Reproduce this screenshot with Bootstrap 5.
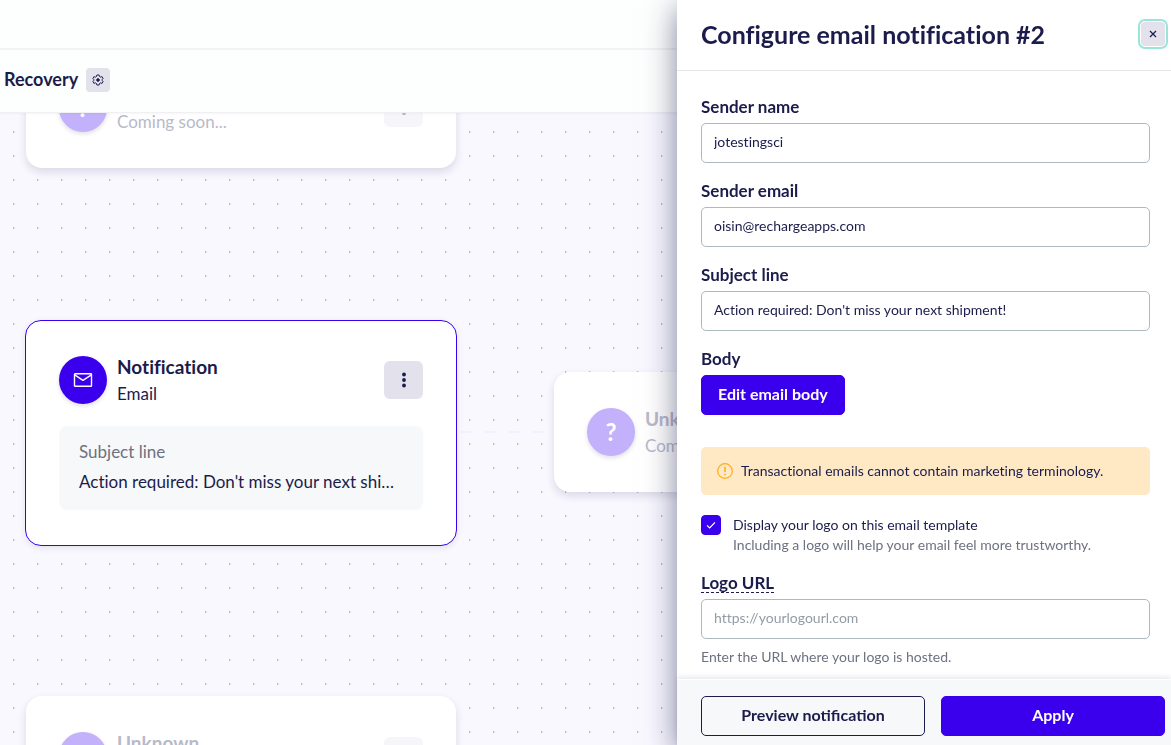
<!DOCTYPE html>
<html lang="en">
<head>
<meta charset="utf-8">
<meta name="viewport" content="width=device-width, initial-scale=1">
<title>Recovery flow</title>
<link href="https://cdn.jsdelivr.net/npm/bootstrap@5.3.0/dist/css/bootstrap.min.css" rel="stylesheet">
<style>
  :root { --ink: #1b1c4b; --brand: #3a00ee; --muted: #6e7180; --chip: #e2e1ec; --pale: #f6f8f9; }
  body { font-family: Lato, "Open Sans", sans-serif; font-variant-ligatures: none; color: var(--ink); font-size: 14px; line-height: 20px; }
  .topbar { height: 50px; background: #fdfffe; border-bottom: 2px solid #f3f3f5; }
  .flowbar { height: 63px; background: #fdfffe; border-bottom: 1px solid #efeff4; box-shadow: 0 1px 2px rgba(27,28,75,.04); padding: 0 0 3px 4px; z-index: 2; }
  .flowbar h1 { font-size: 18px; line-height: 24px; padding-bottom: 2px; }
  .chip-btn { background: var(--chip); color: var(--ink); border: 0; padding: 0; display: inline-flex; align-items: center; justify-content: center; border-radius: 4px; width: 24px; height: 24px; flex: none; }

  /* free canvas that carries the flow nodes */
  .flow-canvas { background-color: #f9f8ff;
    background-image: url("data:image/svg+xml,%3Csvg xmlns='http://www.w3.org/2000/svg' width='24' height='24'%3E%3Crect width='1' height='2' fill='%23b9b8c6'/%3E%3Crect x='1' width='1' height='2' fill='%23e6e5ee'/%3E%3C/svg%3E");
    background-position: 13px 18px; }
  .node { position: absolute; width: 430px; background: #fff; border-radius: 16px; padding: 36px 33px; box-shadow: 0 4px 8px rgba(27,28,75,.14); }
  .node-picked { width: 432px; border: 1px solid var(--brand); padding: 35px 33px; box-shadow: 0 2px 6px rgba(27,28,75,.1); }
  .node-icon { width: 48px; height: 48px; flex: none; background: var(--brand); color: #fff; box-shadow: 0 2px 4px rgba(27,28,75,.14); }
  .node-top { height: 48px; gap: 10px; }
  .node h2 { font-size: 19px; line-height: 27px; }
  .node p { font-size: 17px; line-height: 27px; }
  .node .chip-btn { width: 39px; height: 38px; border-radius: 6px; }
  .node-later h2, .node-later p { color: #b8b9ca; }
  .node-later .node-icon { background: #c4b1fb; }
  .node-later .chip-btn { background: #f6f6fa; color: #b8b9ca; }
  .node-detail { background: var(--pale); border-radius: 8px; margin-top: 22px; padding: 11px 20px 13px; }
  .node .node-detail p { line-height: 30px; }
  .q-mark { font-size: 24px; line-height: 24px; font-weight: 700; }
  .link-line { position: absolute; height: 2px; background: repeating-linear-gradient(90deg, #f3f0ff 0 12px, transparent 12px 24px); }

  /* settings drawer */
  .offcanvas.drawer { --bs-offcanvas-width: 494px; --bs-offcanvas-color: var(--ink); border: 0; box-shadow: 0 8px 30px rgba(27,28,75,.55); }
  .drawer-head { height: 71px; border-bottom: 1px solid #e6e7e9; padding: 0 6px 2px 24px; }
  .drawer-head h2 { font-size: 25px; line-height: 32px; }
  .drawer-head .chip-btn { outline: 2px solid #9be4d8; outline-offset: 1px; }
  .drawer-body { padding: 24px 21px 12px 24px; }
  .field { margin-bottom: 16px; }
  .field-label { display: block; font-size: 17px; line-height: 23px; height: 24px; margin-bottom: 4px; font-weight: 700; }
  .form-control { font-size: 14px; line-height: 20px; height: 40px; padding: 6px 12px 10px; border-color: #adb9c1; border-radius: 5px; color: var(--ink); font-variant-ligatures: none; }
  .form-control::placeholder { color: #929ca5; }
  .btn-flow { font-size: 16px; line-height: 24px; font-weight: 700; padding: 6px 16px 8px; border-radius: 5px; }
  .btn-solid, .btn-solid:hover { background: var(--brand); border-color: var(--brand); color: #fff; }
  .btn-line, .btn-line:hover { background: transparent; border-color: var(--ink); color: var(--ink); }
  .notice { background: #ffe9c5; border-radius: 5px; padding: 14px 16px; margin: 32px 0 20px; }
  .form-check-input.logo-tick { width: 20px; height: 20px; margin: 0; border-radius: 4px; flex: none; float: none; }
  .form-check-input.logo-tick:checked { background-color: var(--brand); border-color: var(--brand);
    background-size: 12px 12px;
    background-image: url("data:image/svg+xml,%3Csvg xmlns='http://www.w3.org/2000/svg' viewBox='0 0 12 12'%3E%3Cpath d='M2 6.4l2.700 2.500L10 3.400' fill='none' stroke='white' stroke-width='1.200'/%3E%3C/svg%3E"); }
  .hint { color: var(--muted); }
  .dashed { border-bottom: 1px dashed var(--ink); line-height: 18px; display: inline-block; }
  .drawer-foot { background: #f7f8fa; border-top: 1px solid #fff; box-shadow: 0 -2px 5px rgba(27,28,75,.1); padding: 16px 6px 9px 24px; }
</style>
</head>
<body class="vh-100 overflow-hidden d-flex flex-column">

<header class="topbar flex-shrink-0"></header>
<div class="flowbar flex-shrink-0 d-flex align-items-center gap-2 position-relative">
  <h1 class="fw-bold m-0">Recovery</h1>
  <button type="button" class="chip-btn" aria-label="Flow settings">
    <svg width="12" height="12" viewBox="0 0 12 12" fill="none" stroke="currentColor" stroke-width="1" stroke-linejoin="round"><path d="M4.900 1h2.200l.4 1.500 1 .6 1.600-.4 1 1.800L10.100 5.600v.8l1 1.100-1 1.800-1.600-.4-1 .6-.4 1.500H4.900l-.4-1.500-1-.6-1.600.4-1-1.800L1.900 6.400v-.8L.9 4.500l1-1.800 1.600.4 1-.6z"/><circle cx="6" cy="6" r="1.300" fill="currentColor"/></svg>
  </button>
</div>

<main class="flow-canvas position-relative flex-grow-1 overflow-hidden">
  <div class="link-line" style="left:461px;top:318px;width:92px"></div>

  <section class="node node-later" style="left:26px;top:-65px">
    <div class="node-top d-flex align-items-center">
      <span class="node-icon rounded-circle d-flex align-items-center justify-content-center q-mark">?</span>
      <div class="flex-grow-1"><h2 class="fw-bold m-0">Unknown</h2><p class="m-0">Coming soon...</p></div>
      <button type="button" class="chip-btn" aria-label="Node menu"><svg width="16" height="16" viewBox="0 0 16 16" fill="currentColor"><circle cx="8" cy="2.500" r="1.800"/><circle cx="8" cy="8" r="1.800"/><circle cx="8" cy="13.500" r="1.800"/></svg></button>
    </div>
  </section>

  <section class="node node-picked" style="left:25px;top:207px">
    <div class="node-top d-flex align-items-center">
      <span class="node-icon rounded-circle d-flex align-items-center justify-content-center">
        <svg width="20" height="16" viewBox="0 0 20 16" fill="none" stroke="currentColor" stroke-width="1.400" stroke-linejoin="round"><rect x="1.500" y="1.700" width="17" height="12.600" rx=".6"/><path d="M1.700 2.800L10 8.300l8.300-5.500"/></svg>
      </span>
      <div class="flex-grow-1"><h2 class="fw-bold m-0">Notification</h2><p class="m-0">Email</p></div>
      <button type="button" class="chip-btn" aria-label="Node menu"><svg width="16" height="16" viewBox="0 0 16 16" fill="currentColor"><circle cx="8" cy="2.500" r="1.900"/><circle cx="8" cy="8" r="1.900"/><circle cx="8" cy="13.500" r="1.900"/></svg></button>
    </div>
    <div class="node-detail">
      <p class="m-0 hint">Subject line</p>
      <p class="m-0">Action required: Don't miss your next shi…</p>
    </div>
  </section>

  <section class="node node-later" style="left:554px;top:259px">
    <div class="node-top d-flex align-items-center">
      <span class="node-icon rounded-circle d-flex align-items-center justify-content-center q-mark">?</span>
      <div class="flex-grow-1"><h2 class="fw-bold m-0">Unknown</h2><p class="m-0">Coming soon...</p></div>
    </div>
  </section>

  <section class="node node-later" style="left:26px;top:583px">
    <div class="node-top d-flex align-items-center">
      <span class="node-icon rounded-circle d-flex align-items-center justify-content-center q-mark">?</span>
      <div class="flex-grow-1"><h2 class="fw-bold m-0">Unknown</h2><p class="m-0">Coming soon...</p></div>
      <button type="button" class="chip-btn" aria-label="Node menu"></button>
    </div>
  </section>
</main>

<aside class="offcanvas offcanvas-end show drawer" data-bs-backdrop="false" data-bs-scroll="true" tabindex="-1" aria-labelledby="drawerTitle">
  <div class="drawer-head flex-shrink-0 d-flex align-items-center justify-content-between">
    <h2 class="fw-bold m-0" id="drawerTitle">Configure email notification #2</h2>
    <button type="button" class="chip-btn" aria-label="Close"><svg width="8" height="8" viewBox="0 0 8 8" stroke="currentColor" stroke-width="1.200"><path d="M1 1l6 6M7 1L1 7"/></svg></button>
  </div>

  <form class="drawer-body flex-grow-1 overflow-auto">
    <div class="field"><label class="field-label" for="senderName">Sender name</label><input class="form-control" id="senderName" type="text" value="jotestingsci"></div>
    <div class="field"><label class="field-label" for="senderEmail">Sender email</label><input class="form-control" id="senderEmail" type="email" value="oisin@rechargeapps.com"></div>
    <div class="field"><label class="field-label" for="subject">Subject line</label><input class="form-control" id="subject" type="text" value="Action required: Don't miss your next shipment!"></div>
    <label class="field-label" for="editBody">Body</label>
    <button type="button" class="btn btn-flow btn-solid" id="editBody">Edit email body</button>

    <div class="notice d-flex align-items-center gap-2" role="alert">
      <svg width="16" height="16" viewBox="0 0 16 16" fill="none" stroke="#ffab1a" class="flex-shrink-0"><circle cx="8" cy="8" r="7.300" stroke-width="1.200"/><path d="M8 3.800v5.200M8 10.800v1.400" stroke-width="1.500"/></svg>
      <span>Transactional emails cannot contain marketing terminology.</span>
    </div>

    <div class="d-flex field">
      <input class="form-check-input logo-tick" type="checkbox" id="showLogo" checked aria-describedby="showLogoHint">
      <div class="ms-2 ps-1"><label class="d-block" for="showLogo">Display your logo on this email template</label><div class="hint" id="showLogoHint">Including a logo will help your email feel more trustworthy.</div></div>
    </div>

    <label class="field-label" for="logoUrl"><span class="dashed">Logo URL</span></label>
    <input class="form-control" id="logoUrl" type="url" placeholder="https://yourlogourl.com" aria-describedby="logoHint">
    <div class="hint mt-2" id="logoHint">Enter the URL where your logo is hosted.</div>
  </form>

  <div class="drawer-foot flex-shrink-0 d-flex gap-3">
    <button type="button" class="btn btn-flow btn-line w-50">Preview notification</button>
    <button type="button" class="btn btn-flow btn-solid w-50">Apply</button>
  </div>
</aside>

<script src="https://cdn.jsdelivr.net/npm/bootstrap@5.3.0/dist/js/bootstrap.bundle.min.js"></script>
</body>
</html>
